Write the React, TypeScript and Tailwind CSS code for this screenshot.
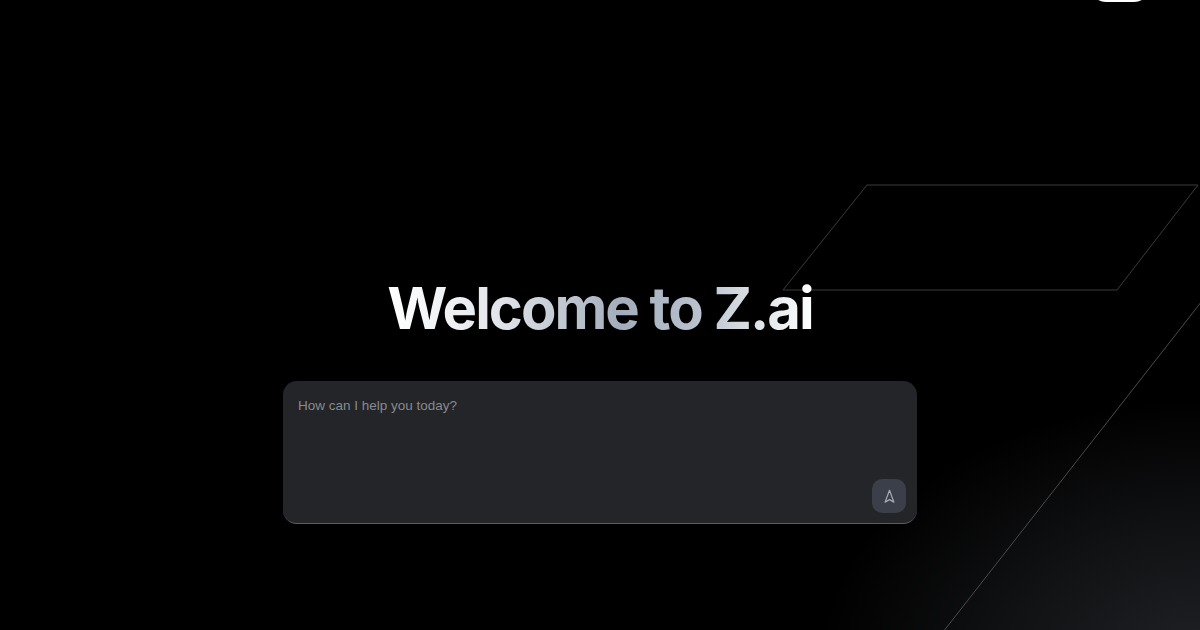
import { useState } from 'react';

function SendIcon() {
  return (
    <svg
      width="15"
      height="15"
      viewBox="0 0 24 24"
      fill="none"
      stroke="currentColor"
      strokeWidth="2"
      strokeLinecap="round"
      strokeLinejoin="round"
    >
      <polygon points="12 2 19 21 12 17 5 21 12 2" />
    </svg>
  );
}

function Backdrop() {
  return (
    <div className="pointer-events-none absolute inset-0">
      <div className="absolute inset-0 bg-[radial-gradient(ellipse_380px_260px_at_1200px_660px,#1f2124_0%,#111214_50%,#000_100%)]" />
      <svg className="absolute inset-0" width="1200" height="630" viewBox="0 0 1200 630">
        <polygon
          points="867,185 1198,185 1117,290 783,290"
          fill="none"
          stroke="#3a3b3d"
          strokeWidth="1"
        />
        <line x1="1202" y1="301" x2="943" y2="632" stroke="#4a4b4e" strokeWidth="1" />
      </svg>
    </div>
  );
}

export default function App() {
  const [prompt, setPrompt] = useState('');

  return (
    <div
      className="relative h-[630px] w-[1200px] overflow-hidden bg-black"
      style={{ fontFamily: 'Inter, "Noto Sans", sans-serif' }}
    >
      <Backdrop />

      {/* header button, mostly above the fold */}
      <div className="absolute right-[50px] top-[-30px] h-[32px] w-[60px] rounded-full bg-white" />

      <main className="relative flex flex-col items-center pt-[279px]">
        <h1 className="bg-[linear-gradient(90deg,#ffffff_0%,#e4e7eb_25%,#a3adbb_55%,#b8c0cc_72%,#ffffff_100%)] bg-clip-text text-[58px] leading-[58px] font-bold tracking-[-0.035em] text-transparent">
          Welcome to Z.ai
        </h1>

        <div className="mt-[44px] flex h-[143px] w-[634px] flex-col rounded-[14px] border-b border-[#5a5c61] bg-[#232528] px-[15px] pt-[15px] pb-[10px]">
          <textarea
            value={prompt}
            onChange={e => setPrompt(e.target.value)}
            placeholder="How can I help you today?"
            style={{ fontFamily: '"Liberation Sans", Arial, sans-serif' }}
            className="w-full flex-1 resize-none bg-transparent text-[13.5px] leading-[20px] text-gray-200 placeholder-[#888a8e] outline-none"
          />
          <div className="flex justify-end">
            <button
              type="button"
              className="flex h-[34px] w-[34px] items-center justify-center rounded-[10px] bg-[#3b3f49] text-[#a4a8b0] -mr-[4px]"
            >
              <SendIcon />
            </button>
          </div>
        </div>
      </main>
    </div>
  );
}
